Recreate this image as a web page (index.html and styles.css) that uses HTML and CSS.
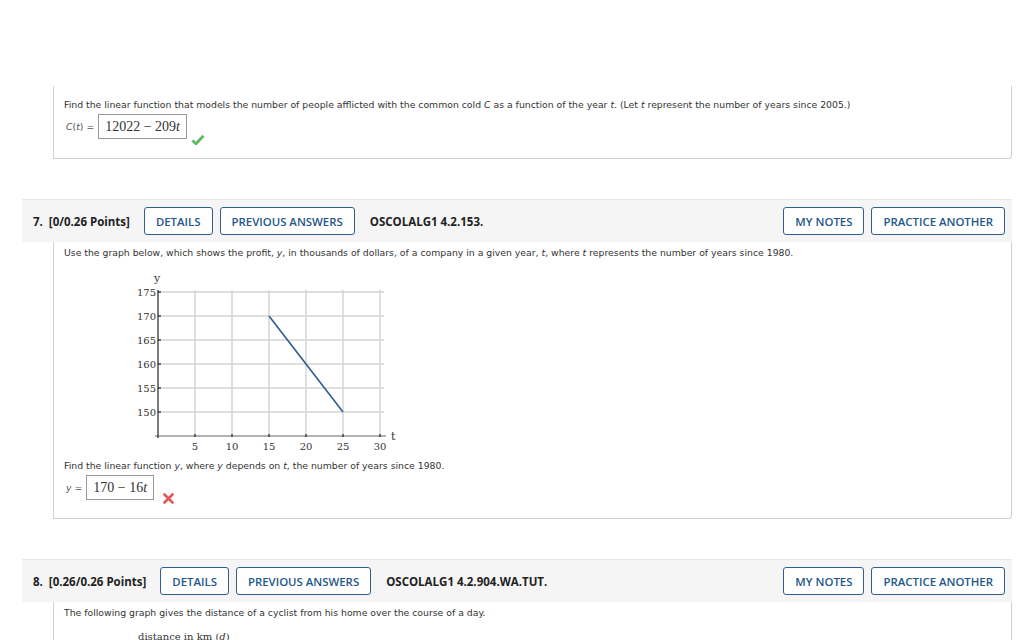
FILE: index.html
```html
<!DOCTYPE html>
<html lang="en">
<head>
  <meta charset="UTF-8">
  <title>Assignment</title>
  <link rel="stylesheet" href="styles.css">
</head>
<body>
  <div class="page">
    <div class="qbody first">
      <p class="prompt">Find the linear function that models the number of people afflicted with the common cold <i>C</i> as a function of the year <i>t</i>. (Let <i>t</i> represent the number of years since 2005.)</p>
      <div class="answer">
        <span class="lbl"><i>C</i>(<i>t</i>) =</span>
        <span class="box">12022 &minus; 209<i>t</i></span>
        <svg class="mark ok" width="14" height="12" viewBox="0 0 14 12"><path d="M1.5 6.5 L5 9.8 L12.5 1.8" fill="none" stroke="#5cb85c" stroke-width="2.8" stroke-linejoin="round"/></svg>
      </div>
    </div>

    <div class="question">
      <div class="qhead">
        <span class="qnum">7.&nbsp; [0/0.26 Points]</span>
        <button class="btn">DETAILS</button>
        <button class="btn">PREVIOUS ANSWERS</button>
        <span class="qref">OSCOLALG1 4.2.153.</span>
        <span class="spacer"></span>
        <button class="btn">MY NOTES</button>
        <button class="btn">PRACTICE ANOTHER</button>
      </div>
      <div class="qbody tall">
        <p class="prompt">Use the graph below, which shows the profit, <i>y</i>, in thousands of dollars, of a company in a given year, <i>t</i>, where <i>t</i> represents the number of years since 1980.</p>
        <svg class="graph" width="280" height="186" viewBox="0 0 280 186">
          <g stroke="#d4d4d4" stroke-width="1.5">
            <line x1="65" y1="20" x2="65" y2="166"/>
            <line x1="102" y1="20" x2="102" y2="166"/>
            <line x1="139" y1="20" x2="139" y2="166"/>
            <line x1="176" y1="20" x2="176" y2="166"/>
            <line x1="213" y1="20" x2="213" y2="166"/>
            <line x1="250" y1="20" x2="250" y2="166"/>
            <line x1="28" y1="22" x2="254" y2="22"/>
            <line x1="28" y1="46" x2="254" y2="46"/>
            <line x1="28" y1="70" x2="254" y2="70"/>
            <line x1="28" y1="94" x2="254" y2="94"/>
            <line x1="28" y1="118" x2="254" y2="118"/>
            <line x1="28" y1="142" x2="254" y2="142"/>
          </g>
          <g stroke="#999" stroke-width="1.5">
            <line x1="25" y1="166" x2="256" y2="166"/>
          </g>
          <g stroke="#222" stroke-width="1.2">
            <line x1="28" y1="20" x2="28" y2="168"/>
            <line x1="28" y1="22" x2="31" y2="22"/>
            <line x1="28" y1="46" x2="31" y2="46"/>
            <line x1="28" y1="70" x2="31" y2="70"/>
            <line x1="28" y1="94" x2="31" y2="94"/>
            <line x1="28" y1="118" x2="31" y2="118"/>
            <line x1="28" y1="142" x2="31" y2="142"/>
            <line x1="65" y1="164" x2="65" y2="167"/>
            <line x1="102" y1="164" x2="102" y2="167"/>
            <line x1="139" y1="164" x2="139" y2="167"/>
            <line x1="176" y1="164" x2="176" y2="167"/>
            <line x1="213" y1="164" x2="213" y2="167"/>
            <line x1="250" y1="164" x2="250" y2="167"/>
          </g>
          <line x1="139" y1="46" x2="213" y2="142" stroke="#2f5b8f" stroke-width="1.6"/>
          <g class="ticks" text-anchor="end">
            <text x="26" y="26">175</text>
            <text x="26" y="50">170</text>
            <text x="26" y="74">165</text>
            <text x="26" y="98">160</text>
            <text x="26" y="122">155</text>
            <text x="26" y="146">150</text>
          </g>
          <g class="ticks" text-anchor="middle">
            <text x="65" y="180">5</text>
            <text x="102" y="180">10</text>
            <text x="139" y="180">15</text>
            <text x="176" y="180">20</text>
            <text x="213" y="180">25</text>
            <text x="250" y="180">30</text>
          </g>
          <text class="axis" x="27" y="12" text-anchor="middle">y</text>
          <text class="axis" x="261" y="170">t</text>
        </svg>
        <p class="prompt after">Find the linear function <i>y</i>, where <i>y</i> depends on <i>t</i>, the number of years since 1980.</p>
        <div class="answer">
          <span class="lbl"><i>y</i> =</span>
          <span class="box">170 &minus; 16<i>t</i></span>
          <svg class="mark bad" width="11" height="11" viewBox="0 0 11 11"><path d="M1.5 1.5 L9.5 9.5 M9.5 1.5 L1.5 9.5" stroke="#e0585a" stroke-width="2.6" stroke-linecap="round"/></svg>
        </div>
      </div>
    </div>

    <div class="question">
      <div class="qhead">
        <span class="qnum">8.&nbsp; [0.26/0.26 Points]</span>
        <button class="btn">DETAILS</button>
        <button class="btn">PREVIOUS ANSWERS</button>
        <span class="qref">OSCOLALG1 4.2.904.WA.TUT.</span>
        <span class="spacer"></span>
        <button class="btn">MY NOTES</button>
        <button class="btn">PRACTICE ANOTHER</button>
      </div>
      <div class="qbody">
        <p class="prompt">The following graph gives the distance of a cyclist from his home over the course of a day.</p>
        <p class="caption">distance in km (<i>d</i>)</p>
      </div>
    </div>
  </div>
</body>
</html>
```

FILE: styles.css
```css
body {
  margin: 0;
  background: #fff;
  font-family: "DejaVu Sans", Verdana, sans-serif;
  color: #333;
}
.page {
  width: 990px;
  margin-left: 22px;
  padding-top: 86px;
}
.qbody {
  box-sizing: border-box;
  margin-left: 31px;
  border: 1px solid #d0d0d0;
  border-top: none;
  border-radius: 0 0 4px 0;
  padding: 4px 10px 0 10px;
}
.first {
  height: 73px;
  padding-top: 12px;
}
.tall {
  height: 277px;
}
.prompt {
  margin: 0;
  font-size: 9.3px;
  line-height: 14px;
}
.prompt.after {
  margin-top: 3px;
}
.answer {
  display: flex;
  align-items: flex-start;
  margin-top: 2px;
  padding-left: 2px;
}
.lbl {
  font-size: 9.3px;
  color: #555;
  margin-top: 7px;
  margin-right: 4px;
}
.box {
  box-sizing: border-box;
  border: 1px solid #999;
  padding: 0 6px;
  height: 25px;
  font-family: "Liberation Serif", "Times New Roman", serif;
  font-size: 14px;
  color: #333;
  line-height: 23px;
}
.mark.ok {
  margin-left: 4px;
  margin-top: 20px;
}
.mark.bad {
  margin-left: 9px;
  margin-top: 18px;
}
.question {
  margin-top: 40px;
}
.qhead {
  box-sizing: border-box;
  display: flex;
  align-items: center;
  height: 43px;
  background: #f5f5f5;
  border-top: 1px solid #e6e6e6;
  padding: 0 7px 0 11px;
  font-family: "Open Sans", "Liberation Sans", sans-serif;
}
.qnum {
  font-size: 11.5px;
  font-weight: 700;
  color: #222;
  margin-right: 14px;
}
.btn {
  height: 28px;
  padding: 0 11px;
  margin-right: 7px;
  background: #fff;
  border: 1.5px solid #2e5f90;
  border-radius: 3px;
  color: #24578a;
  font-family: "Open Sans", "Liberation Sans", sans-serif;
  font-size: 11.4px;
  font-weight: 600;
}
.qref {
  font-size: 11.5px;
  font-weight: 700;
  color: #222;
  margin-left: 8px;
}
.spacer {
  flex: 1;
}
.qhead .btn:last-child {
  margin-right: 0;
}
.graph {
  display: block;
  margin: 10px 0 0 66px;
}
.ticks {
  font-family: "DejaVu Serif", "Liberation Serif", serif;
  font-size: 10px;
  fill: #333;
}
.axis {
  font-family: "DejaVu Serif", "Liberation Serif", serif;
  font-size: 11px;
  fill: #333;
}
.caption {
  margin: 11px 0 0 74px;
  font-family: "DejaVu Serif", "Liberation Serif", serif;
  font-size: 10px;
  color: #333;
}
```
